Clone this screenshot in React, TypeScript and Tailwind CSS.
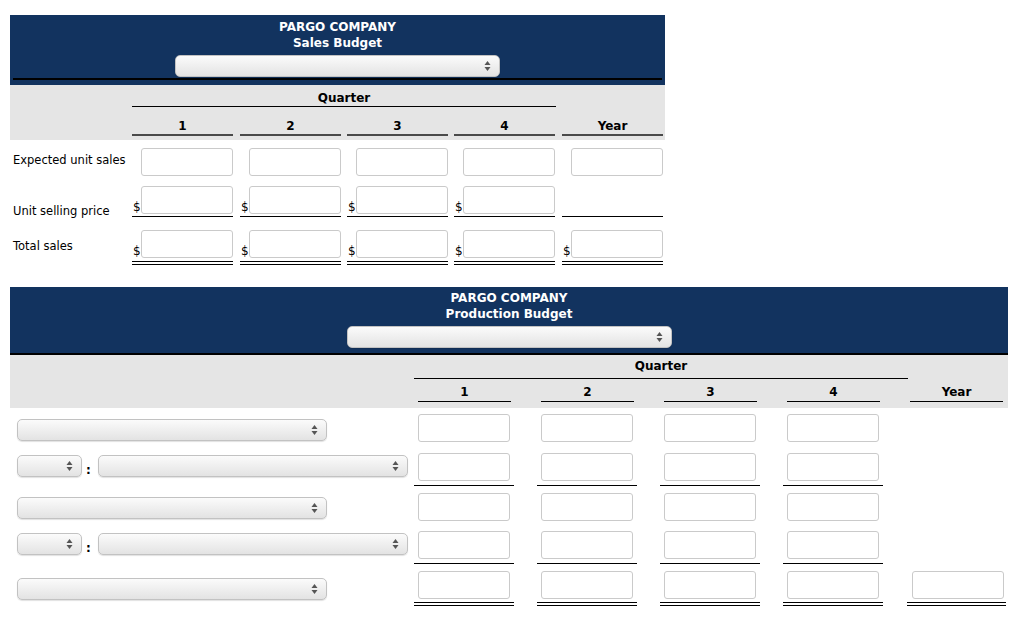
import React from "react";

function Arrows() {
  return (
    <svg width="7" height="11" viewBox="0 0 7 11" className="absolute right-[8px] top-1/2 -translate-y-1/2">
      <polygon points="0.5,4.5 3.5,0.5 6.5,4.5" fill="#555" />
      <polygon points="0.5,6.5 6.5,6.5 3.5,10.5" fill="#555" />
    </svg>
  );
}

function Select({ className }: { className: string }) {
  return (
    <div
      className={`relative h-[22px] shrink-0 rounded-[5px] border border-[#c2c2c2] bg-linear-to-b from-[#fbfbfb] to-[#e3e3e3] shadow-[0_1px_1px_rgba(0,0,0,0.12)] ${className}`}
    >
      <Arrows />
    </div>
  );
}

function Box({ className = "" }: { className?: string }) {
  return <div className={`h-[28px] w-[92px] rounded-[3px] border border-[#cacaca] bg-white ${className}`} />;
}

function DoubleLine() {
  return <div className="h-[4px] border-y border-black" />;
}

const salesCols = "grid grid-cols-[122px_108px_107px_107px_108px_101px]";
const prodCols = "grid grid-cols-[404px_123px_123px_123px_123px_102px]";

function SalesBudget() {
  return (
    <div className="w-[655px]">
      <div className="flex h-[70px] flex-col items-center bg-[#12335f] pt-[4px] text-white">
        <div className="text-center text-[12px] font-bold leading-[16px]">
          <div>PARGO COMPANY</div>
          <div>Sales Budget</div>
        </div>
        <Select className="mt-[4px] w-[325px]" />
        <div className="mx-[3px] mt-[1px] h-[2px] self-stretch bg-black" />
      </div>

      <div className="h-[55px] bg-[#e5e5e5] pt-[5px] text-[12px] font-bold leading-[16px] text-black">
        <div className="ml-[122px] w-[424px] border-b border-black text-center">Quarter</div>
        <div className={`${salesCols} mt-[11px]`}>
          <div />
          {["1", "2", "3", "4", "Year"].map((h) => (
            <div key={h}>
              <div className="w-[101px] border-b-2 border-[#4a4a4a] text-center">{h}</div>
            </div>
          ))}
        </div>
      </div>

      {/* rows */}
      <div className="text-[11.5px] leading-[16px] text-black">
        <div className={`${salesCols} pt-[8px]`}>
          <div className="pl-[3px] pt-[4px]">Expected unit sales</div>
          {[0, 1, 2, 3, 4].map((i) => (
            <div key={i}>
              <div className="w-[101px] pl-[9px]">
                <Box />
              </div>
            </div>
          ))}
        </div>

        <div className={`${salesCols} pt-[10px]`}>
          <div className="self-end pl-[3px] translate-y-[2px]">Unit selling price</div>
          {[0, 1, 2, 3].map((i) => (
            <div key={i}>
              <div className="flex w-[101px] items-end border-b border-black pb-[2px]">
                <span className="w-[9px] pl-[1px] text-[12px] leading-[14px]">$</span>
                <Box />
              </div>
            </div>
          ))}
          <div>
            <div className="h-[31px] w-[101px] border-b border-black" />
          </div>
        </div>

        <div className={`${salesCols} pt-[13px]`}>
          <div className="pl-[3px] pt-[8px]">Total sales</div>
          {[0, 1, 2, 3, 4].map((i) => (
            <div key={i}>
              <div className="w-[101px]">
                <div className="flex items-end pb-[3px]">
                  <span className="w-[9px] pl-[1px] text-[12px] leading-[14px]">$</span>
                  <Box />
                </div>
                <DoubleLine />
              </div>
            </div>
          ))}
        </div>
      </div>
    </div>
  );
}

function ProdInputs({ line }: { line: "none" | "single" | "double" }) {
  return (
    <>
      {[0, 1, 2, 3].map((i) => (
        <div key={i}>
          <div className={`w-[100px] ${line === "single" ? "border-b border-black pb-[4px]" : ""}`}>
            <div className={`px-[4px] ${line === "double" ? "pb-[3px]" : ""}`}>
              <Box />
            </div>
            {line === "double" && <DoubleLine />}
          </div>
        </div>
      ))}
    </>
  );
}

function ProductionBudget() {
  return (
    <div className="mt-[22px] w-[998px]">
      <div className="flex h-[68px] flex-col items-center border-b-2 border-black bg-[#12335f] pt-[3px] text-white">
        <div className="text-center text-[12px] font-bold leading-[16px]">
          <div>PARGO COMPANY</div>
          <div>Production Budget</div>
        </div>
        <Select className="mt-[4px] w-[325px]" />
      </div>

      <div className="h-[53px] bg-[#e5e5e5] pt-[3px] text-[12px] font-bold leading-[16px] text-black">
        <div className="ml-[404px] w-[494px] border-b border-black pb-[4px] text-center">Quarter</div>
        <div className={`${prodCols} mt-[5px]`}>
          <div />
          {["1", "2", "3", "4", "Year"].map((h) => (
            <div key={h}>
              <div className="ml-[4px] w-[93px] border-b border-black pb-[1px] text-center">{h}</div>
            </div>
          ))}
        </div>
      </div>

      <div className="text-[12px] leading-[16px] text-black">
        <div className={`${prodCols} pt-[6px]`}>
          <div className="pl-[7px] pt-[5px]">
            <Select className="w-[310px]" />
          </div>
          <ProdInputs line="none" />
          <div />
        </div>

        <div className={`${prodCols} pt-[11px]`}>
          <div className="flex items-start pl-[7px] pt-[2px]">
            <Select className="w-[65px]" />
            <span className="w-[16px] pl-[4px] pt-[7px] font-bold">:</span>
            <Select className="w-[310px]" />
          </div>
          <ProdInputs line="single" />
          <div />
        </div>

        <div className={`${prodCols} pt-[7px]`}>
          <div className="pl-[7px] pt-[4px]">
            <Select className="w-[310px]" />
          </div>
          <ProdInputs line="none" />
          <div />
        </div>

        <div className={`${prodCols} pt-[10px]`}>
          <div className="flex items-start pl-[7px] pt-[2px]">
            <Select className="w-[65px]" />
            <span className="w-[16px] pl-[4px] pt-[7px] font-bold">:</span>
            <Select className="w-[310px]" />
          </div>
          <ProdInputs line="single" />
          <div />
        </div>

        <div className={`${prodCols} pt-[7px]`}>
          <div className="pl-[7px] pt-[7px]">
            <Select className="w-[310px]" />
          </div>
          <ProdInputs line="double" />
          <div>
            <div className="ml-[1px] w-[99px]">
              <div className="px-[5px] pb-[3px]">
                <Box />
              </div>
              <DoubleLine />
            </div>
          </div>
        </div>
      </div>
    </div>
  );
}

export default function App() {
  return (
    <div className="min-h-[617px] bg-white pl-[10px] pt-[15px] font-['DejaVu_Sans',Verdana,sans-serif]">
      <SalesBudget />
      <ProductionBudget />
    </div>
  );
}
